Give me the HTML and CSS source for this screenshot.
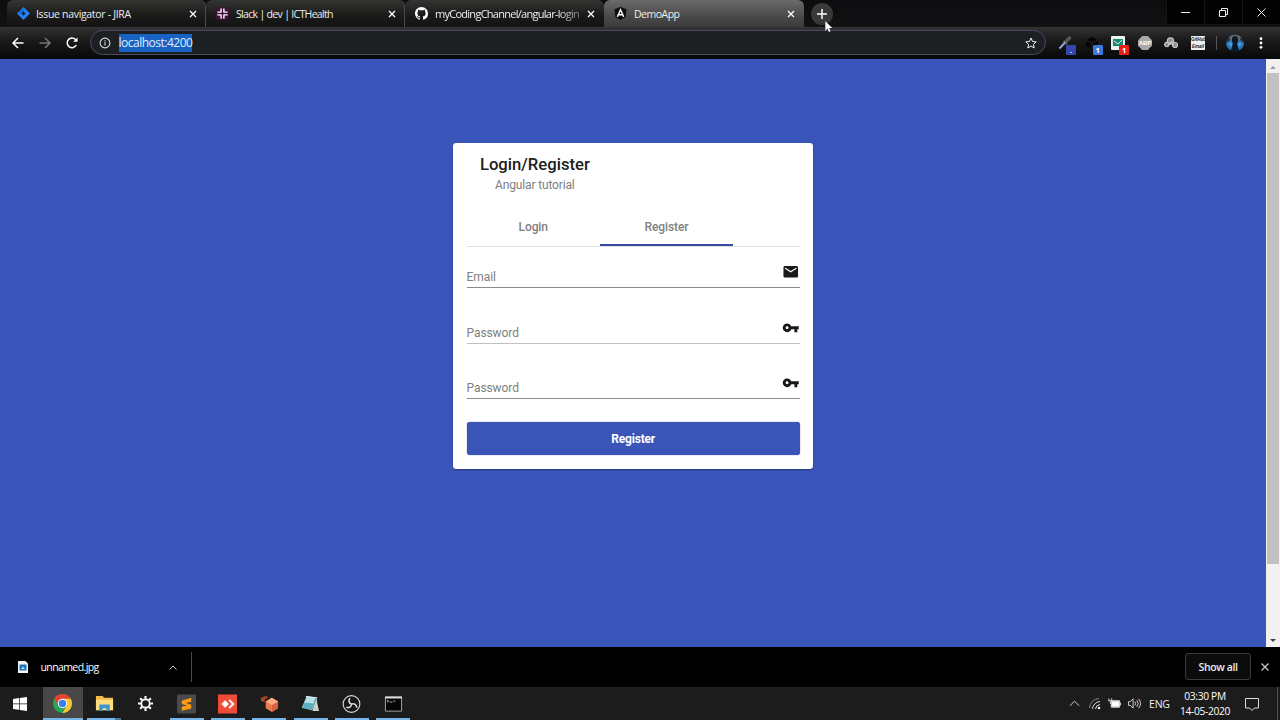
FILE: index.html
```html
<!DOCTYPE html>
<html lang="en">
<head>
    <meta charset="UTF-8">
    <meta name="viewport" content="width=device-width, initial-scale=1.0">
    <title>DemoApp</title>
    <link rel="stylesheet" href="styles.css">
</head>
<body>
    <!-- Tab strip -->
    <header class="tab-strip">
        <div class="tab">
            <svg class="favicon" viewBox="0 0 14 14"><path d="M7 0l7 7-7 7-7-7z" fill="#2681f7"/><path d="M7 4.7L9.3 7 7 9.3 4.7 7z" fill="#123"/><path d="M7 0v4.7L3.5 8.2 2 5z" fill="#1868db"/></svg>
            <span class="tab-title t-jira">Issue navigator - JIRA</span>
            <svg class="close" viewBox="0 0 8 8"><path d="M1 1l6 6M7 1L1 7"/></svg>
        </div>
        <div class="tab">
            <svg class="favicon" viewBox="0 0 14 14"><rect width="14" height="14" rx="3" fill="#3d1238"/><path d="M5.5 2v3.500M8.500 2v3.500M5.500 8.500V12M8.500 8.500V12M2 5.500h3.500M8.500 5.500H12M2 8.500h3.500M8.500 8.500H12" stroke="#fff" stroke-width="1.5" stroke-linecap="round"/></svg>
            <span class="tab-title t-slack">Slack | dev | ICTHealth</span>
            <svg class="close" viewBox="0 0 8 8"><path d="M1 1l6 6M7 1L1 7"/></svg>
        </div>
        <div class="tab">
            <svg class="favicon" viewBox="0 0 16 16"><path fill="#fff" d="M8 0C3.58 0 0 3.58 0 8c0 3.54 2.29 6.53 5.47 7.59.4.07.55-.17.55-.38 0-.19-.01-.82-.01-1.49-2.01.37-2.53-.49-2.69-.94-.09-.23-.48-.94-.82-1.13-.28-.15-.68-.52-.01-.53.63-.01 1.08.58 1.23.82.72 1.21 1.87.87 2.33.66.07-.52.28-.87.51-1.07-1.78-.2-3.64-.89-3.64-3.95 0-.87.31-1.59.82-2.15-.08-.2-.36-1.02.08-2.12 0 0 .67-.21 2.2.82.64-.18 1.32-.27 2-.27s1.36.09 2 .27c1.53-1.04 2.2-.82 2.2-.82.44 1.1.16 1.92.08 2.12.51.56.82 1.27.82 2.15 0 3.07-1.87 3.75-3.65 3.95.29.25.54.73.54 1.48 0 1.07-.01 1.93-.01 2.2 0 .21.15.46.55.38A8.01 8.01 0 0 0 16 8c0-4.42-3.58-8-8-8z"/></svg>
            <span class="tab-title t-github">myCodingChannel/angular-login</span>
            <svg class="close" viewBox="0 0 8 8"><path d="M1 1l6 6M7 1L1 7"/></svg>
        </div>
        <div class="tab active">
            <svg class="favicon" viewBox="0 0 14 14"><path d="M7 0l6.5 2.3-1 8.6L7 14l-5.5-3.1-1-8.600z" fill="#0c0c0e"/><path d="M3.6 10.6L7 3l3.4 7.6M4.9 8.3h4.2" stroke="#fff" stroke-width="1.5" fill="none"/></svg>
            <span class="tab-title t-demo">DemoApp</span>
            <svg class="close" viewBox="0 0 8 8"><path d="M1 1l6 6M7 1L1 7"/></svg>
        </div>
        <button class="new-tab" aria-label="New tab">
            <svg width="10" height="10" viewBox="0 0 10 10"><path d="M5 0v10M0 5h10" stroke="#fff" stroke-width="1.5"/></svg>
            <svg class="cursor" viewBox="0 0 12 18"><path d="M.5 .5v14l3.4-3.1 2 5 2.3-1-2-4.800h4.600z" fill="#fff"/></svg>
        </button>
        <div class="window-controls">
            <span><svg width="9" height="9" viewBox="0 0 9 9"><path d="M0 4.5h9"/></svg></span>
            <span><svg width="9" height="9" viewBox="0 0 9 9"><path d="M.5 2.5h6v6h-6zM2.5 2.5v-2h6v6h-2"/></svg></span>
            <span><svg width="9" height="9" viewBox="0 0 9 9"><path d="M.5 .5l8 8M8.5 .5l-8 8"/></svg></span>
        </div>
    </header>

    <!-- Toolbar -->
    <nav class="toolbar">
        <div class="nav-buttons">
            <svg viewBox="0 0 12 12"><path d="M11.5 6H1.2M6 1L1 6l5 5"/></svg>
            <svg class="disabled" viewBox="0 0 12 12"><path d="M.5 6h10.3M6 1l5 5-5 5"/></svg>
            <svg viewBox="0 0 12 12"><path d="M10.3 8A4.800 4.800 0 1 1 9.5 2.6L10.8 4"/><path d="M11.5 .5v4.3H7.2z" fill="#fff" stroke="none"/></svg>
        </div>
        <div class="address-bar">
            <svg class="info" viewBox="0 0 12 12"><circle cx="6" cy="6" r="4.9"/><path d="M6 5.3v3.3M6 3.2v1.3"/></svg>
            <span class="url">localhost:4200</span>
            <svg class="star" viewBox="0 0 24 24"><path d="M12 2l3 7 7.5 .7-5.7 5 1.7 7.3-6.500-3.900L5.500 22l1.700-7.300-5.700-5L9 9z"/></svg>
        </div>
        <div class="extensions">
            <span class="ext"><svg viewBox="0 0 14 14"><path d="M1.5 12.5L7 6.5" stroke="#9aa0d8" stroke-width="2"/><path d="M8 5.5L11.5 2" stroke="#55555c" stroke-width="3.5" stroke-linecap="round"/><path d="M5.5 5L9 8.5" stroke="#bbb"/></svg><b class="badge navy">.</b></span>
            <span class="ext"><svg viewBox="0 0 14 14"><path d="M7 1l6 3v6l-6 3-6-3V4z" fill="#050505"/><path d="M1 4l6 3 6-3M7 7v6" stroke="#292929" fill="none"/></svg><b class="badge blue">1</b></span>
            <span class="ext"><svg viewBox="0 0 14 14"><rect width="14" height="14" rx="1" fill="#eef3f1"/><path d="M2 3h10v7H2z" fill="#178978"/><path d="M3 5l4 3 4-4" stroke="#d6f3ed" fill="none"/></svg><b class="badge red">1</b></span>
            <span class="ext"><svg viewBox="0 0 14 14"><path d="M4.2 0h5.6L14 4.2v5.6L9.8 14H4.2L0 9.8V4.2z" fill="#a9a9a9"/><text x="7" y="9.3" class="abp">ABP</text></svg></span>
            <span class="ext"><svg viewBox="0 0 14 14"><g fill="#8b8b8b" stroke="#c4c4c4" stroke-width="1.2"><circle cx="6.5" cy="5" r="3.2"/><circle cx="2.8" cy="8.5" r="2.2"/><circle cx="11" cy="9" r="2.5"/><path d="M4.5 8.5l3-3 2 4.5" fill="none"/></g></svg></span>
            <span class="ext github-email"><i>GitHub</i><i>Email</i></span>
        </div>
        <span class="divider"></span>
        <svg class="avatar" viewBox="0 0 18 18"><circle cx="9" cy="9" r="9" fill="#1b3045"/><path d="M3 3a9 9 0 0 1 12 0l-2 5H5z" fill="#666b70"/><path d="M6 5c0-4 6-4 6 0v4H6z" fill="#111820"/><path d="M0 9l4-3 4 4-3 6c-3-1-5-4-5-7zM18 9l-4-3-4 4 3 6c3-1 5-4 5-7z" fill="#2876b8"/><path d="M2 10l3-2 2 3-2 2zM16 10l-3-2-2 3 2 2z" fill="#4b9bd6"/><path d="M7 9h4l2 8-4 1-4-1z" fill="#0b1a2b"/></svg>
        <svg class="menu" viewBox="0 0 4 12"><circle cx="2" cy="1.7" r="1.4"/><circle cx="2" cy="6" r="1.4"/><circle cx="2" cy="10.3" r="1.4"/></svg>
    </nav>

    <!-- App -->
    <div class="viewport">
        <main class="page">
            <section class="card">
                <h1>Login/Register</h1>
                <p class="subtitle">Angular tutorial</p>
                <div class="tabs">
                    <span class="tab-label">Login</span>
                    <span class="tab-label selected">Register</span>
                </div>
                <form>
                    <div class="field">
                        <span>Email</span>
                        <svg viewBox="0 0 24 24"><path d="M20 4H4c-1.1 0-1.99 .9-1.99 2L2 18c0 1.1 .9 2 2 2h16c1.1 0 2-.9 2-2V6c0-1.1-.9-2-2-2zm0 4l-8 5-8-5V6l8 5 8-5v2z"/></svg>
                    </div>
                    <div class="field light">
                        <span>Password</span>
                        <svg viewBox="0 0 24 24"><path d="M12.65 10C11.83 7.67 9.61 6 7 6c-3.31 0-6 2.69-6 6s2.69 6 6 6c2.61 0 4.83-1.67 5.65-4H17v4h4v-4h2v-4H12.65zM7 14c-1.1 0-2-.9-2-2s.9-2 2-2 2 .9 2 2-.9 2-2 2z"/></svg>
                    </div>
                    <div class="field">
                        <span>Password</span>
                        <svg viewBox="0 0 24 24"><path d="M12.65 10C11.83 7.67 9.61 6 7 6c-3.31 0-6 2.69-6 6s2.69 6 6 6c2.61 0 4.83-1.67 5.65-4H17v4h4v-4h2v-4H12.65zM7 14c-1.1 0-2-.9-2-2s.9-2 2-2 2 .9 2 2-.9 2-2 2z"/></svg>
                    </div>
                    <button class="submit" type="button">Register</button>
                </form>
            </section>
        </main>
        <div class="scrollbar">
            <svg viewBox="0 0 8 4"><path d="M0 4l4-4 4 4z" fill="#999"/></svg>
            <div class="thumb"></div>
            <svg class="down" viewBox="0 0 8 4"><path d="M0 0l4 4 4-4z" fill="#444"/></svg>
        </div>
    </div>

    <!-- Download shelf -->
    <div class="downloads">
        <div class="download-item">
            <svg class="file" viewBox="0 0 10 12"><path d="M0 0h7.5L10 2.5V12H0z" fill="#f1f5f8"/><path d="M1.5 3.5h7v6h-7z" fill="#1d72b8"/><path d="M3 8l2-2.5L7 8z" fill="#bfe0f7"/></svg>
            <span class="file-name">unnamed.jpg</span>
            <svg class="chevron" viewBox="0 0 8 5"><path d="M.5 4.5L4 1l3.5 3.5"/></svg>
        </div>
        <button class="show-all">Show all</button>
        <svg class="shelf-close" viewBox="0 0 8 8"><path d="M.5 .5l7 7M7.5 .5l-7 7"/></svg>
    </div>

    <!-- Taskbar -->
    <footer class="taskbar">
        <div class="apps">
            <span class="app start"><svg viewBox="0 0 14 14"><path d="M0 2l6-.9v5.5H0zM6.7 1L14 0v6.6H6.7zM0 7.3h6v5.5l-6-.9zM6.7 7.3H14V14l-7.3-1z" fill="#fff"/></svg></span>
            <span class="app focused"><svg class="big" viewBox="0 0 20 20"><circle cx="10" cy="10" r="10" fill="#27a657"/><path d="M10 10L1.34 5A10 10 0 0 1 18.66 5z" fill="#e54435"/><path d="M18.66 5A10 10 0 0 1 10 20l4.3-7.5L10 5z" fill="#fbc52e"/><path d="M1.34 5L6 12.5 10 5z" fill="#e54435"/><circle cx="10" cy="10" r="5" fill="#fff"/><circle cx="10" cy="10" r="3.9" fill="#3c7eea"/></svg></span>
            <span class="app running multi"><svg class="big" viewBox="0 0 20 18"><path d="M1 1h7l1.5 2H19v13H1z" fill="#f3bd48"/><path d="M1 5h18v11H1z" fill="#ffdc7c"/><path d="M4.5 17v-7h11v7H12v-3H8v3z" fill="#3b94d0"/></svg></span>
            <span class="app"><svg class="gear" viewBox="0 0 16 16"><circle cx="8" cy="8" r="4.5" fill="none" stroke="#fff" stroke-width="1.9"/><path d="M8 0v3M8 13v3M0 8h3M13 8h3M2.3 2.3l2.2 2.2M11.5 11.5l2.2 2.2M13.7 2.3l-2.2 2.2M4.5 11.5l-2.2 2.2" stroke="#fff" stroke-width="2.2"/></svg></span>
            <span class="app running"><svg class="full" viewBox="0 0 20 20"><rect width="20" height="20" rx="1.5" fill="#4a4a4a"/><path d="M5 6.5l10-3v4L9.5 9l5.5 1.8v4L5 17v-4l5.5-1.5L5 10z" fill="#ff9b12"/></svg></span>
            <span class="app running"><svg class="full" viewBox="0 0 20 20"><rect width="20" height="20" fill="#ef4b36"/><path d="M7.500 6l4 4-4 4-4-4zM11 6.500L12.500 5l5 5-5 5-1.500-1.500 3.500-3.500z" fill="#fff"/></svg></span>
            <span class="app running"><svg class="big" viewBox="0 0 20 18"><path d="M1 3l5-2 3 1.5L5 5v3L1 6z" fill="#a94225"/><path d="M6 7l6.5-4L19 7v7l-6.5 4L6 14z" fill="#ed7b50"/><path d="M12.5 10.5L19 7v7l-6.5 4z" fill="#d8623e"/><path d="M6 7l6.5-4L19 7l-6.5 3.5z" fill="#ffac85"/></svg></span>
            <span class="app running"><svg class="big" viewBox="0 0 20 18"><path d="M6 1l11 2v13L1 14z" fill="#589fac"/><path d="M6 2l9 1-4 13L1 13z" fill="#b5e2e8"/><path d="M4 8l9 1-2 7L1 13z" fill="#5cafc1"/><path d="M16 4l3 13h-7z" fill="#cfd2c9"/><path d="M5 1.5L17 3" stroke="#eee"/></svg></span>
            <span class="app running"><svg class="full" viewBox="0 0 20 20"><circle cx="10" cy="10" r="8.8" fill="#171717" stroke="#d9d9d9" stroke-width="1.2"/><path d="M10 10C7 9 6.5 6 8.5 4M10 10c3-1 5.500 1 5.500 4M10 10c0 3-2.500 4.500-5.500 3.500" fill="none" stroke="#d9d9d9" stroke-width="1.7"/></svg></span>
            <span class="app running"><svg class="full" viewBox="0 0 20 20"><path d="M1.5 2.5h17v15h-17z" fill="#050505" stroke="#aaa"/><path d="M1 3.2h18" stroke="#ddd" stroke-width="2"/><path d="M3 6l2 1-2 1M6 8h3M10 7h2" stroke="#ddd" fill="none" stroke-width=".8"/></svg></span>
        </div>
        <div class="tray">
            <svg class="tray-up" viewBox="0 0 12 7"><path d="M1 6l5-5 5 5"/></svg>
            <svg viewBox="0 0 13 13"><path d="M4.5 12A8 8 0 0 1 12 4.5M7.5 12A5 5 0 0 1 12 7.5"/><path d="M1.5 11A10 10 0 0 1 11 1.5" stroke="#888"/><circle cx="11" cy="11" r="1.3" fill="#fff" stroke="none"/></svg>
            <svg viewBox="0 0 14 13"><path d="M4 4h8v6H4z" fill="#fff"/><path d="M3.5 3.5h9v7h-9zM13.5 5.5v3M1 1v2M4 1v2M0 3.5h4.5M2.5 4v3"/></svg>
            <svg viewBox="0 0 14 13"><path d="M.5 4.5h2l3-3v10l-3-3h-2zM7.5 4.5q1.5 2 0 4M9.5 3q3 3.5 0 7M11.5 1.5q4 5 0 10"/></svg>
            <span class="lang">ENG</span>
            <div class="clock"><span>03:30 PM</span><span>14-05-2020</span></div>
            <svg class="notify" viewBox="0 0 14 14"><path d="M.5 1.5h13V11h-4L7 13.500 4.500 11h-4z"/></svg>
        </div>
        <span class="desktop-peek"></span>
    </footer>
</body>
</html>
```
FILE: styles.css
```css
* {
    box-sizing: border-box;
}
body {
    margin: 0;
    width: 1280px;
    height: 720px;
    overflow: hidden;
    display: flex;
    flex-direction: column;
    background-color: #000;
    color: #fff;
    font-family: "Open Sans", "Noto Sans", sans-serif;
}
svg {
    display: block;
    flex: none;
    overflow: visible;
}
button {
    font-family: inherit;
    border: none;
    padding: 0;
}

/* tab strip */
.tab-strip {
    height: 27px;
    display: flex;
    padding-left: 7px;
    background: linear-gradient(#0b0c0e, #121214);
}
.tab {
    width: 199px;
    height: 27px;
    padding: 0 8px 0 10px;
    display: flex;
    align-items: center;
    border-right: 1px solid #4b4b4b;
    background: linear-gradient(#343432, #191a18 60%, #131313);
    border-radius: 6px 6px 0 0;
}
.tab:nth-child(3) {
    border-right-color: transparent;
}
.tab.active {
    width: 200px;
    padding-right: 9px;
    background: linear-gradient(#6a6a6b, #4a4a4a 60%, #3b3b3c);
    border-right: none;
}
.favicon {
    width: 13px;
    height: 13px;
}
.tab-title {
    margin-left: 6px;
    flex: 1;
    font-size: 10.5px;
    line-height: 18px;
    white-space: nowrap;
    color: #eee;
}
.t-jira {
    letter-spacing: -0.32px;
}
.t-slack {
    margin-left: 7px;
    letter-spacing: -0.68px;
}
.t-github {
    margin-left: 7px;
    letter-spacing: -0.73px;
    font-size: 11px;
    -webkit-mask-image: linear-gradient(90deg, #000 80%, rgba(0, 0, 0, 0.4) 95%);
    mask-image: linear-gradient(90deg, #000 80%, rgba(0, 0, 0, 0.4) 95%);
}
.t-demo {
    margin-left: 7px;
    letter-spacing: -0.5px;
}
.close {
    width: 8px;
    height: 8px;
    stroke: #fff;
    stroke-width: 1.3;
}
.new-tab {
    position: relative;
    width: 22px;
    height: 22px;
    margin: 3px 0 0 7px;
    display: flex;
    align-items: center;
    justify-content: center;
    border-radius: 50%;
    background-color: #39393a;
}
.cursor {
    position: absolute;
    left: 14px;
    top: 18px;
    width: 8px;
    height: 12px;
    z-index: 2;
}
.window-controls {
    display: flex;
    margin-left: auto;
    height: 24px;
    background-color: #020202;
}
.window-controls span {
    width: 38px;
    display: flex;
    align-items: center;
    justify-content: center;
    border-left: 1px solid #151515;
}
.window-controls path {
    stroke: #eee;
    fill: none;
}

/* toolbar */
.toolbar {
    height: 32px;
    display: flex;
    align-items: center;
    background: linear-gradient(#343434, #1b1b1b 40%, #090909);
    border-bottom: 1px solid #080812;
}
.nav-buttons {
    width: 90px;
    padding-left: 12px;
    display: flex;
    gap: 15px;
}
.nav-buttons svg {
    width: 12px;
    height: 12px;
    fill: none;
    stroke: #fff;
    stroke-width: 1.5;
}
.nav-buttons .disabled {
    stroke: #777;
}
.address-bar {
    width: 956px;
    height: 25px;
    padding: 0 8px;
    display: flex;
    align-items: center;
    border: 1.5px solid #464b60;
    border-radius: 13px;
    background-color: #1c2023;
}
.info {
    width: 12px;
    height: 12px;
    fill: none;
    stroke: #ddd;
    stroke-width: 1.1;
}
.url {
    margin-left: 7.5px;
    height: 18px;
    line-height: 18px;
    font-size: 12px;
    letter-spacing: -0.5px;
    background-color: #1862c3;
    color: #e2edfa;
}
.star {
    width: 12px;
    height: 12px;
    margin-left: auto;
    fill: none;
    stroke: #eee;
    stroke-width: 2;
}
.extensions {
    display: flex;
    gap: 12.6px;
    margin-left: 12px;
}
.ext {
    position: relative;
    width: 14px;
    height: 14px;
}
.abp {
    fill: #fff;
    font: bold 6px "Liberation Sans", sans-serif;
    text-anchor: middle;
}
.badge {
    position: absolute;
    left: 8px;
    top: 9px;
    width: 10px;
    height: 10px;
    border-radius: 1px;
    text-align: center;
    font-size: 7.5px;
    line-height: 10px;
}
.navy {
    background-color: #3546a8;
}
.blue {
    background-color: #3b78dc;
}
.red {
    background-color: #e62218;
}
.github-email {
    background-color: #eee;
    color: #111;
    overflow: hidden;
    font: bold 4.5px/7px "Liberation Sans", sans-serif;
    text-align: center;
}
.github-email i {
    display: block;
}
.divider {
    width: 1px;
    height: 14px;
    margin-left: 11px;
    background-color: #555;
}
.avatar {
    width: 18px;
    height: 18px;
    margin-left: 9.5px;
}
.menu {
    width: 4px;
    height: 12px;
    margin-left: 15px;
    fill: #fff;
}

/* app */
.viewport {
    height: 588px;
    display: flex;
}
.page {
    width: 1266px;
    padding-top: 83.5px;
    background-color: #3a55b9;
    font-family: Roboto, sans-serif;
}
.card {
    width: 360px;
    height: 326px;
    margin: 0 auto;
    padding: 12px 13.3px 12px 13.6px;
    border-radius: 3.3px;
    background-color: #fff;
    color: #202020;
    box-shadow: 0 1px 2px rgba(0, 0, 0, 0.35);
}
h1 {
    margin: 0 0 0 13.3px;
    font-size: 16.67px;
    line-height: 20px;
    font-weight: 500;
}
.subtitle {
    margin: 2px 0 0 28.5px;
    font-size: 12px;
    line-height: 16px;
    letter-spacing: -0.15px;
    color: #808080;
}
.tabs {
    height: 41px;
    margin-top: 13px;
    display: flex;
    border-bottom: 1px solid #e0e0e0;
}
.tab-label {
    width: 133.3px;
    height: 40px;
    line-height: 42px;
    text-align: center;
    font-size: 12px;
    letter-spacing: -0.1px;
    font-weight: 500;
    color: #808080;
}
.selected {
    border-bottom: 2px solid #3949a6;
}
.field {
    height: 41.5px;
    margin-bottom: 14px;
    display: flex;
    align-items: flex-start;
    justify-content: space-between;
    padding-top: 16.5px;
    border-bottom: 1px solid #8b8b8b;
    font-size: 12px;
    letter-spacing: -0.1px;
    color: #808080;
}
.field.light {
    border-bottom-color: #c0c0c0;
}
.field span {
    line-height: 29px;
}
.field svg {
    width: 17.5px;
    height: 17.5px;
    fill: #191919;
}
.submit {
    width: 100%;
    height: 33px;
    margin-top: 9px;
    border-radius: 3.3px;
    background-color: #3a54b8;
    box-shadow: 0 0 1px #26376f;
    color: #fff;
    font: 700 12px Roboto, sans-serif;
    letter-spacing: -0.2px;
}
.scrollbar {
    width: 14px;
    padding: 7px 1px 5px;
    display: flex;
    flex-direction: column;
    align-items: center;
    background-color: #f1f1f1;
}
.scrollbar svg {
    width: 6px;
    height: 3px;
}
.thumb {
    width: 12px;
    height: 491px;
    margin-top: 4px;
    background-color: #c1c1c1;
}
.down {
    margin-top: auto;
}

/* download shelf */
.downloads {
    height: 40px;
    display: flex;
    align-items: center;
    background-color: #000;
}
.download-item {
    width: 192px;
    height: 30px;
    padding: 0 14px 0 18px;
    display: flex;
    align-items: center;
    border-right: 1px solid #4b4b4b;
}
.file {
    width: 10px;
    height: 12px;
}
.file-name {
    margin-left: 12.5px;
    font-size: 10.5px;
    line-height: 16px;
    letter-spacing: -0.6px;
}
.chevron {
    width: 8px;
    height: 5px;
    margin-left: auto;
    fill: none;
    stroke: #ccc;
}
.show-all {
    width: 66px;
    height: 27px;
    margin: 0 0 1px auto;
    border: 1px solid #3b3b3b;
    border-radius: 3px;
    background-color: #0c0c0c;
    color: #eee;
    font-size: 10.5px;
    font-weight: 600;
    letter-spacing: -0.4px;
}
.shelf-close {
    width: 8px;
    height: 8px;
    margin: 0 11px 0 10px;
    stroke: #ccc;
    stroke-width: 1.2;
}

/* taskbar */
.taskbar {
    height: 33px;
    display: flex;
    background-color: #1c1c1c;
}
.apps {
    display: flex;
    gap: 1.3px;
    padding-left: 1.5px;
}
.app {
    width: 40px;
    height: 33px;
    display: flex;
    align-items: center;
    justify-content: center;
    background: no-repeat center bottom / 34px 2px;
}
.app svg {
    width: 14px;
    height: 14px;
}
.start {
    padding-right: 3px;
}
.app .gear {
    width: 15px;
    height: 15px;
}
.app .full {
    width: 19px;
    height: 20px;
}
.app .big {
    width: 19px;
    height: 19px;
}
.running {
    background-image: linear-gradient(#76b5e9, #76b5e9);
}
.multi {
    background-image: linear-gradient(90deg, #76b5e9 28px, #4b7694 28px);
}
.focused {
    background-color: #484848;
    background-image: linear-gradient(#76b5e9, #76b5e9);
    background-size: 40px 2px;
}
.tray {
    margin-left: auto;
    display: flex;
    align-items: center;
}
.tray svg {
    width: 13px;
    height: 13px;
    margin-right: 7px;
    fill: none;
    stroke: #ddd;
}
.tray .tray-up {
    width: 11px;
    height: 7px;
    margin-right: 8px;
}
.lang {
    width: 20px;
    margin-left: 1px;
    font-size: 10.5px;
    letter-spacing: -0.2px;
    color: #eee;
}
.clock {
    width: 72px;
    display: flex;
    flex-direction: column;
    text-align: center;
    font-size: 10.2px;
    line-height: 15px;
    letter-spacing: -0.3px;
}
.tray .notify {
    width: 14px;
    height: 14px;
    margin: 0 18px 0 4px;
}
.desktop-peek {
    width: 3px;
    border-left: 1px solid #555;
}
```
